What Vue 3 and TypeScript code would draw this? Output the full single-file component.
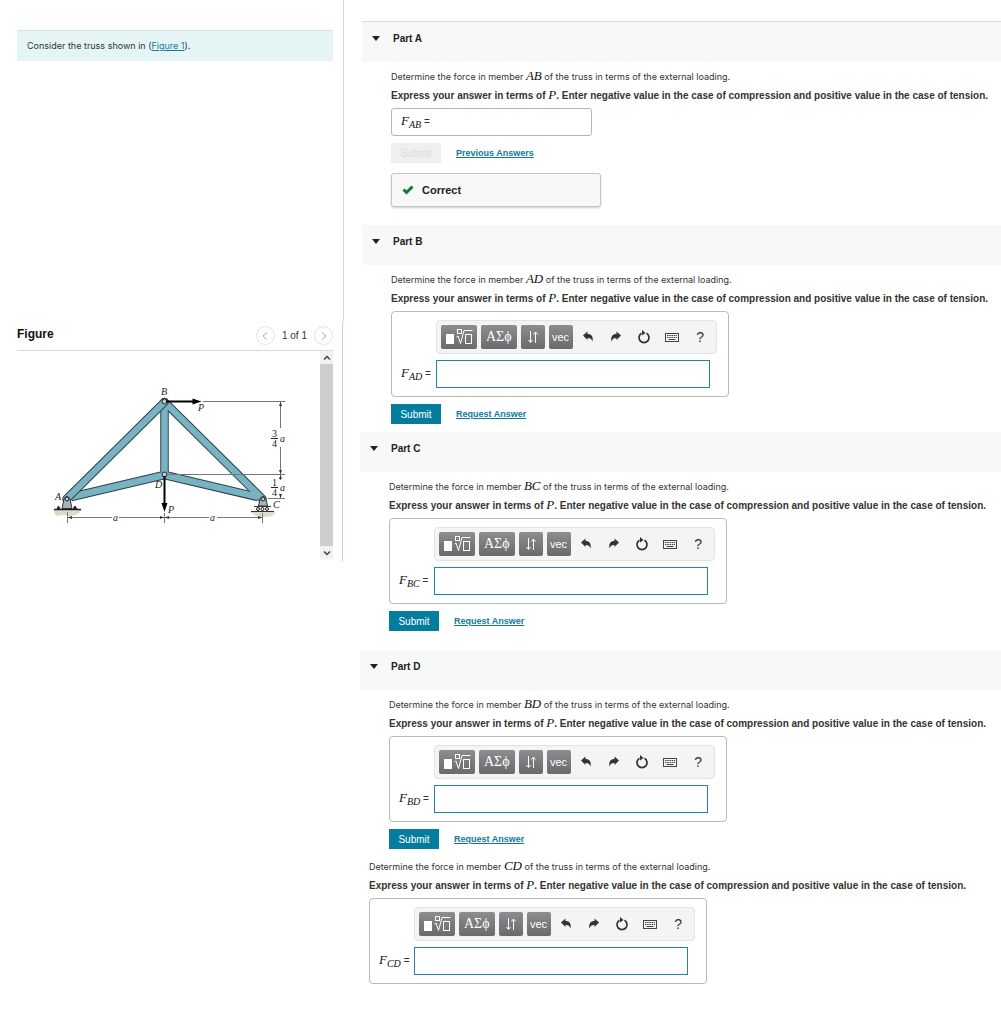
<script setup lang="ts">
import { ref } from 'vue'

interface Part {
  id: string
  title?: string
  member: string
  solved: boolean
}

const parts: Part[] = [
  { id: 'a', title: 'Part A', member: 'AB', solved: true },
  { id: 'b', title: 'Part B', member: 'AD', solved: false },
  { id: 'c', title: 'Part C', member: 'BC', solved: false },
  { id: 'd', title: 'Part D', member: 'BD', solved: false },
  { id: 'e', member: 'CD', solved: false },
]

const answers = ref<Record<string, string>>({ a: '', b: '', c: '', d: '', e: '' })
</script>

<template>
  <div class="page">
    <aside class="side">
      <div class="problem">
        <p class="intro">Consider the truss shown in (<a href="#figure">Figure 1</a>).</p>
      </div>

      <section id="figure" class="figure">
        <header class="figure-head">
          <h2>Figure</h2>
          <div class="pager">
            <button type="button" class="round" aria-label="Previous figure">
              <svg width="8" height="10" viewBox="0 0 8 10"><path d="M6 1.500 2 5l4 3.500" /></svg>
            </button>
            <span>1 of 1</span>
            <button type="button" class="round" aria-label="Next figure">
              <svg width="8" height="10" viewBox="0 0 8 10"><path d="M2 1.500 6 5 2 8.500" /></svg>
            </button>
          </div>
        </header>
        <div class="viewport">
          <svg class="truss" viewBox="17 351 303 208" role="img" aria-label="Truss diagram">
            <!-- ground -->
            <path d="M53 510h29l-4 4-6 2-10-1-6 1z" fill="#dedbcb" />
            <path d="M250 512h26l-4 4-8 1-8-1z" fill="#dedbcb" />
            <!-- members -->
            <g stroke="#2c4248" stroke-width="8.500">
              <path d="M164.500 403v70M164.500 475 71 497M164.500 475 258 497" />
              <path d="M262.500 499 164.500 402" stroke-linecap="round" />
            </g>
            <g stroke="#79b3c3" stroke-width="6.500">
              <path d="M164.500 403v70M164.500 475 71 497M164.500 475 258 497" />
              <path d="M262.500 499 164.500 402" stroke-linecap="round" />
            </g>
            <path d="M66.500 499 164.500 402" stroke="#2c4248" stroke-width="8.500" stroke-linecap="round" />
            <path d="M66.500 499 164.500 402" stroke="#79b3c3" stroke-width="6.500" stroke-linecap="round" />
            <!-- supports -->
            <path d="M62 508.500 64 499q3-5 6 0l2 9.500z" fill="#a9b3b8" stroke="#333" />
            <path d="M258.500 506 260 499q3-5 6 0l1.500 7z" fill="#a9b3b8" stroke="#333" />
            <path d="M54 509.500h27" stroke="#222" stroke-width="1.500" />
            <path d="M57 509l1.500-3 1.500 3zM73 509l2-3 2 3z" fill="#222" stroke="#222" />
            <path d="M254 506.500h17M251 511.500h23" stroke="#333" />
            <g fill="#eee" stroke="#222">
              <circle cx="258" cy="509" r="1.500" /><circle cx="262.500" cy="509" r="1.500" /><circle cx="267" cy="509" r="1.500" />
            </g>
            <g fill="#b9c9ce" stroke="#222">
              <circle cx="67" cy="499" r="2" /><circle cx="263" cy="499" r="2" />
              <circle cx="164.500" cy="401.500" r="2.500" /><circle cx="164.500" cy="474.500" r="2.500" />
            </g>
            <!-- dimension lines -->
            <g stroke="#777">
              <path d="M203 401.500h82M168 474.500h117M268 498.500h17" />
              <path d="M280.500 402v26M280.500 447v27M280.500 475v5M280.500 494v4" />
              <path d="M67.500 512v11M164.500 513v10M262.500 513v10" />
              <path d="M68 517.500h44M119 517.500h90M217 517.500h45" />
            </g>
            <g fill="#333">
              <path d="m280.500 402-1.500 4h3zM280.500 474l-1.500-4h3zM280.500 475l-1.500 4h3zM280.500 498l-1.500-4h3z" />
              <path d="m68 517.500 4-1.500v3zM164 517.500l-4-1.500v3zM165 517.500l4-1.500v3zM262 517.500l-4-1.500v3z" />
            </g>
            <!-- loads -->
            <path d="M166 401.500h28M164.500 476v28" stroke="#000" stroke-width="2" />
            <path d="m201.500 401.500-9-3v6zM164.500 512l-3-9h6z" fill="#000" />
            <!-- labels -->
            <g class="tag">
              <text x="161" y="395">B</text>
              <text x="198" y="411">P</text>
              <text x="55" y="500">A</text>
              <text x="155" y="488">D</text>
              <text x="168" y="513">P</text>
              <text x="273" y="508">C</text>
              <text x="113" y="521">a</text>
              <text x="210" y="521">a</text>
              <text x="280" y="442">a</text>
              <text x="280" y="491">a</text>
            </g>
            <g class="num">
              <text x="272" y="437">3</text>
              <text x="272" y="447">4</text>
              <text x="272" y="486">1</text>
              <text x="272" y="496">4</text>
            </g>
            <path d="M271 438.500h7M271 487.500h7" stroke="#222" />
          </svg>
          <div class="scroll">
            <button type="button" aria-label="Scroll up">
              <svg width="8" height="6" viewBox="0 0 8 6"><path d="M1 4.500 4 1.500l3 3" /></svg>
            </button>
            <div class="thumb"></div>
            <button type="button" aria-label="Scroll down">
              <svg width="8" height="6" viewBox="0 0 8 6"><path d="M1 1.500 4 4.500l3-3" /></svg>
            </button>
          </div>
        </div>
      </section>
    </aside>

    <main class="parts">
      <section v-for="p in parts" :key="p.id" class="part" :class="`part-${p.id}`">
        <header v-if="p.title" class="part-head">
          <svg width="8" height="5" viewBox="0 0 8 5"><path d="M0 0h8L4 5z" fill="#222" /></svg>
          <h2>{{ p.title }}</h2>
        </header>

        <div class="body">
          <p class="ask">Determine the force in member <i>{{ p.member }}</i> of the truss in terms of the external loading.</p>
          <p class="express">Express your answer in terms of <i>P</i>. Enter negative value in the case of compression and positive value in the case of tension.</p>

          <div v-if="p.solved" class="solved">
            <label :for="`answer-${p.id}`"><i>F<sub>{{ p.member }}</sub></i> =</label>
            <input :id="`answer-${p.id}`" v-model="answers[p.id]" type="text" readonly />
          </div>

          <div v-else class="editor">
            <div class="toolbar" role="toolbar" aria-label="Equation tools">
              <button type="button" class="key wide" aria-label="Templates">
                <svg width="30" height="20" viewBox="0 0 30 20" fill="none" stroke="#fff">
                  <rect x="2" y="7" width="8" height="10" fill="#fff" stroke="none" />
                  <rect x="13.500" y="2.500" width="4" height="4" />
                  <path d="m12.500 10 1.500-1 2.500 7.500L20 3.500h8.500" />
                  <rect x="21.500" y="7.500" width="6" height="9" />
                </svg>
              </button>
              <button type="button" class="key wide greek">ΑΣϕ</button>
              <button type="button" class="key" aria-label="Subscript and superscript">
                <svg width="12" height="14" viewBox="0 0 12 14" fill="none" stroke="#fff">
                  <path d="M3.500 1v11M1.500 10l2 2.500 2-2.500M8.500 13V2M6.500 4.500l2-2.500 2 2.500" />
                </svg>
              </button>
              <button type="button" class="key vec">vec</button>
              <button type="button" class="action" aria-label="Undo">
                <svg width="12" height="12" viewBox="0 0 12 12"><path d="M1 4.500 5.500 0.500v2.500c4 0 6 2.500 5 7.500-.8-2.600-2.300-3.600-5-3.500V9z" fill="#333" /></svg>
              </button>
              <button type="button" class="action" aria-label="Redo">
                <svg width="12" height="12" viewBox="0 0 12 12"><path d="M11 4.500 6.500 0.500v2.500c-4 0-6 2.500-5 7.500.8-2.600 2.300-3.600 5-3.500V9z" fill="#333" /></svg>
              </button>
              <button type="button" class="action" aria-label="Reset">
                <svg width="14" height="14" viewBox="0 0 14 14"><path d="M9.500 3.300A5 5 0 1 1 4.500 3.300" fill="none" stroke="#333" stroke-width="1.700" /><path d="M5 0v5.500L8.500 3z" fill="#333" /></svg>
              </button>
              <button type="button" class="action" aria-label="Keyboard">
                <svg width="16" height="10" viewBox="0 0 16 10" fill="none" stroke="#444">
                  <rect x="1.500" y="1.500" width="13" height="8" />
                  <path d="M3 3.500h10M3 5.500h10" stroke-dasharray="1.500 .7" />
                  <path d="M4.500 7.500h7" />
                </svg>
              </button>
              <button type="button" class="action help">?</button>
            </div>
            <label :for="`answer-${p.id}`"><i>F<sub>{{ p.member }}</sub></i> =</label>
            <input :id="`answer-${p.id}`" v-model="answers[p.id]" type="text" />
          </div>

          <div v-if="p.title" class="row">
            <button type="button" class="submit" :disabled="p.solved">Submit</button>
            <a href="#">{{ p.solved ? 'Previous Answers' : 'Request Answer' }}</a>
          </div>

          <div v-if="p.solved" class="result">
            <svg width="12" height="10" viewBox="0 0 12 10"><path d="M1.500 4.500 4.500 7.500 10.500 1.500" fill="none" stroke="#0a7d33" stroke-width="3" /></svg>
            <strong>Correct</strong>
          </div>
        </div>
      </section>
    </main>
  </div>
</template>

<style>
body {
  background: #fff;
}
</style>

<style scoped>
.page {
  display: flex;
  align-items: flex-start;
  font-family: "Liberation Sans", Arial, sans-serif;
  font-size: 10px;
  color: #333;
}
h2,
p {
  margin: 0;
}
button {
  padding: 0;
  border: 0;
  background: none;
  font-family: inherit;
  display: flex;
  align-items: center;
  justify-content: center;
}
a {
  color: #117a9c;
}
i {
  font: italic 13px/1 "Liberation Serif", "Times New Roman", serif;
  color: #111;
}

.side {
  flex: 0 0 344px;
}
.problem {
  box-sizing: border-box;
  min-height: 321px;
  padding: 30px 10px 0 17px;
  border-right: 1px solid #d9d9d9;
}
.intro {
  padding: 0 10px;
  border-top: 1px solid #d5e8e6;
  background: #e5f5f6;
  font-family: Inter, Arial, sans-serif;
  font-size: 9px;
  line-height: 30px;
}
.figure {
  margin-right: 1px;
  padding: 0 9px 2px 17px;
  border-right: 1px solid #c9d3e0;
}
.figure-head {
  display: flex;
  align-items: center;
  justify-content: space-between;
  height: 29px;
  border-bottom: 1px solid #cfdbe6;
}
.figure-head h2 {
  padding-bottom: 4px;
  font-size: 12px;
  color: #111;
}
.pager {
  display: flex;
  align-items: center;
  gap: 7px;
}
.round {
  box-sizing: border-box;
  width: 19px;
  height: 19px;
  border: 1px solid #e3e3e3;
  border-radius: 50%;
}
.round path,
.scroll path {
  fill: none;
  stroke: #aaa;
}
.viewport {
  display: flex;
}
.truss {
  flex: 1;
  min-width: 0;
  fill: none;
}
.tag,
.num {
  fill: #222;
  font: italic 10px "Liberation Serif", "Times New Roman", serif;
}
.num {
  font-style: normal;
}
.scroll {
  display: flex;
  flex-direction: column;
  width: 13px;
  background: #f1f1f1;
}
.scroll button {
  height: 13px;
}
.scroll path {
  stroke: #444;
  stroke-width: 1.5;
}
.thumb {
  flex: 1;
  background: #cdcdcd;
}

.parts {
  flex: 1;
  min-width: 0;
  padding-top: 21px;
}
.part {
  margin-left: 16px;
}
.part-a,
.part-b {
  margin-left: 18px;
}
.part-a .part-head {
  border-top: 1px solid #dcdcdc;
}
.part-b {
  margin-top: 18px;
}
.part-c {
  margin-top: 8px;
}
.part-d {
  margin-top: 19px;
}
.part-e {
  margin-top: 3px;
  margin-left: 25px;
}
.part-head {
  display: flex;
  align-items: center;
  gap: 13px;
  height: 33px;
  padding: 0 10px 7px;
  background: #f8f8f8;
}
.part-head h2 {
  font-size: 10px;
  color: #222;
}
.body {
  padding: 5px 0 0 29px;
}
.part-e .body {
  padding-left: 0;
}
.ask,
.express {
  height: 19px;
  line-height: 19px;
  white-space: nowrap;
}
.ask {
  font-family: Inter, Arial, sans-serif;
  font-size: 9px;
}
.express {
  font-weight: bold;
}
sub {
  font-size: 10px;
  line-height: 1;
  vertical-align: -3px;
}
label {
  padding-left: 9px;
  white-space: nowrap;
}
input {
  box-sizing: border-box;
  min-width: 0;
  font: 12px "Liberation Sans", Arial, sans-serif;
  outline: none;
}
.solved {
  display: flex;
  align-items: center;
  box-sizing: border-box;
  max-width: 201px;
  height: 28px;
  margin-top: 3px;
  border: 1px solid #b5b5b5;
  border-radius: 3px;
}
.solved input {
  flex: 1;
  border: 0;
  background: none;
}
.editor {
  display: grid;
  grid-template-columns: 44px 274px;
  grid-template-rows: 34px 28px;
  row-gap: 6px;
  align-items: center;
  box-sizing: border-box;
  max-width: 338px;
  height: 86px;
  margin-top: 3px;
  padding: 8px 0;
  border: 1px solid #b8bcbc;
  border-radius: 4px;
}
.editor input {
  height: 28px;
  border: 1px solid #1f86a3;
  background: #fff;
}
.toolbar {
  grid-column: 2;
  display: flex;
  align-items: center;
  gap: 4px;
  box-sizing: border-box;
  width: 281px;
  height: 34px;
  padding: 0 4px;
  border: 1px solid #e3e3e3;
  border-radius: 4px;
  background: #f4f4f4;
}
.key {
  width: 24px;
  height: 24px;
  border-radius: 2px;
  background: linear-gradient(#8d8d8f, #6a6a6c);
  color: #fff;
}
.wide {
  width: 36px;
}
.greek {
  font: 14px "Liberation Serif", serif;
}
.vec {
  font-size: 11px;
}
.action {
  width: 24px;
  height: 24px;
}
.help {
  font-size: 14px;
  color: #333;
}
.row {
  display: flex;
  align-items: center;
  gap: 15px;
  margin-top: 7px;
}
.row a {
  font-size: 9px;
  font-weight: bold;
}
.submit {
  width: 50px;
  height: 20px;
  background: #047c9e;
  font-size: 10px;
  color: #fff;
}
.submit:disabled {
  background: #efefef;
  color: #dcdcdc;
}
.result {
  display: flex;
  align-items: center;
  gap: 8px;
  box-sizing: border-box;
  max-width: 210px;
  height: 34px;
  margin-top: 10px;
  padding: 0 10px;
  border: 1px solid #c4c4c4;
  border-radius: 3px;
  box-shadow: 0 1px 2px #d0d0d0;
  background: #f8f8f8;
  font-size: 11px;
  color: #222;
}
</style>
